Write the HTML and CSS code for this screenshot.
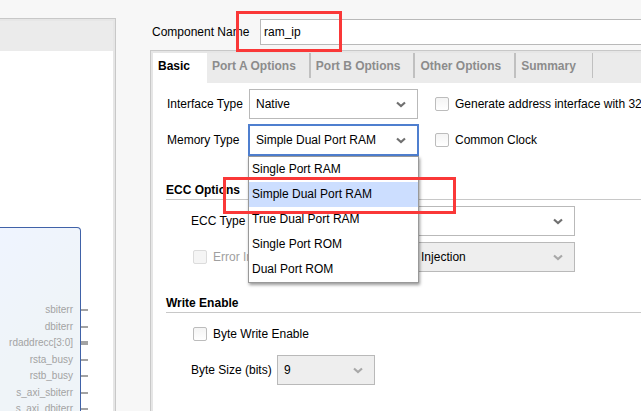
FILE: index.html
```
<!DOCTYPE html>
<html lang="en">
<head>
  <meta charset="UTF-8">
  <meta name="viewport" content="width=device-width, initial-scale=1.0">
  <title>Block Memory Generator</title>
  <link rel="stylesheet" href="styles.css">
</head>
<body>
  <svg class="defs" aria-hidden="true">
    <symbol id="chevron" viewBox="0 0 10 7">
      <path d="M1 1.5 L5 5 L9 1.5" fill="none" stroke="currentColor" stroke-width="2.2"/>
    </symbol>
  </svg>

  <aside class="preview">
    <div class="preview-header"></div>
    <div class="symbol">
      <ul class="ports">
        <li>sbiterr</li>
        <li>dbiterr</li>
        <li class="bus">rdaddrecc[3:0]</li>
        <li>rsta_busy</li>
        <li>rstb_busy</li>
        <li>s_axi_sbiterr</li>
        <li>s_axi_dbiterr</li>
      </ul>
    </div>
  </aside>

  <main class="config">
    <div class="name-row">
      <label for="name">Component Name</label>
      <input type="text" id="name" value="ram_ip">
      <span class="mark mark-name"></span>
    </div>

    <section class="panel">
      <nav class="tabs">
        <button class="tab active">Basic</button>
        <button class="tab">Port A Options</button>
        <button class="tab">Port B Options</button>
        <button class="tab">Other Options</button>
        <button class="tab">Summary</button>
      </nav>

      <div class="content">
        <div class="row">
          <label class="main-label" for="interface">Interface Type</label>
          <div class="select type-select">
            <select id="interface"><option>Native</option></select>
            <svg class="arrow"><use href="#chevron"/></svg>
          </div>
          <label class="check"><input type="checkbox">Generate address interface with 32 bits</label>
        </div>
        <div class="row">
          <label class="main-label" for="memory">Memory Type</label>
          <div class="select type-select open">
            <select id="memory"><option>Simple Dual Port RAM</option></select>
            <svg class="arrow"><use href="#chevron"/></svg>
            <ul class="menu" role="listbox">
              <li role="option">Single Port RAM</li>
              <li role="option" class="selected" aria-selected="true">Simple Dual Port RAM<span class="mark mark-option"></span></li>
              <li role="option">True Dual Port RAM</li>
              <li role="option">Single Port ROM</li>
              <li role="option">Dual Port ROM</li>
            </ul>
          </div>
          <label class="check"><input type="checkbox">Common Clock</label>
        </div>

        <h2>ECC Options</h2>
        <div class="group ecc">
          <div class="row">
            <label class="sub-label" for="ecc">ECC Type</label>
            <div class="select ecc-select">
              <select id="ecc"><option>No ECC</option></select>
              <svg class="arrow"><use href="#chevron"/></svg>
            </div>
          </div>
          <div class="row">
            <label class="check disabled"><input type="checkbox" disabled>Error Injection Type</label>
            <div class="select error-select disabled">
              <select aria-label="Error Injection Type" disabled><option>Single Bit Error Injection</option></select>
              <svg class="arrow"><use href="#chevron"/></svg>
            </div>
          </div>
        </div>

        <h2>Write Enable</h2>
        <div class="group">
          <div class="row">
            <label class="check"><input type="checkbox">Byte Write Enable</label>
          </div>
          <div class="row">
            <label class="sub-label" for="size">Byte Size (bits)</label>
            <div class="select size-select disabled">
              <select id="size" disabled><option>9</option></select>
              <svg class="arrow"><use href="#chevron"/></svg>
            </div>
          </div>
        </div>
      </div>
    </section>
  </main>
</body>
</html>
```

FILE: styles.css
```
* {
  box-sizing: border-box;
}
body {
  margin: 0;
  height: 100vh;
  display: grid;
  grid-template-columns: 116px minmax(0, 1fr);
  grid-template-rows: minmax(0, 1fr);
  gap: 34px;
  overflow: hidden;
  background: #f7f7f7;
  color: #000;
  font: 12px/16px "Liberation Sans", Arial, sans-serif;
  white-space: nowrap;
}
ul {
  list-style: none;
  margin: 0;
  padding: 0;
}
input, select, button {
  font: inherit;
  color: inherit;
  margin: 0;
}
.defs {
  position: absolute;
  width: 0;
  height: 0;
}

/* symbol preview */
.preview {
  margin-top: 18px;
  border-top: 1px solid #c8c8c8;
  border-right: 1px solid #c8c8c8;
  background: #fff;
  box-shadow: inset -2px 2px #e6e6e6;
  padding: 2px 2px 0 0;
  overflow: hidden;
}
.preview-header {
  height: 30px;
  background: #ebebeb;
}
.symbol {
  width: 81px;
  height: 400px;
  margin-top: 176px;
  padding-top: 74px;
  border: 1px solid #4062a8;
  border-left: 0;
  border-radius: 0 4px 0 0;
  background: linear-gradient(135deg, #eff4ff, #eff4f8 30%);
}
.ports {
  display: grid;
  grid-auto-rows: 16px 17px;
  margin-right: -8px;
  font-size: 10px;
  color: #a3a3a3;
}
.ports li {
  display: flex;
  justify-content: flex-end;
  align-items: center;
  gap: 8px;
}
.ports li::after {
  content: "";
  width: 7px;
  height: 2px;
  background: #a3a3a3;
}
.ports .bus::after {
  height: 4px;
}

/* configuration */
.config {
  display: flex;
  flex-direction: column;
  gap: 5px;
  padding-top: 19px;
}
.name-row {
  position: relative;
  display: flex;
  align-items: center;
  padding-left: 2px;
}
.name-row label {
  width: 108px;
}
.name-row input {
  flex: 1;
  min-width: 0;
  height: 26px;
  padding: 0 3px;
  border: 1px solid #b9b9b9;
  border-right: 0;
  background: #fff;
  outline: none;
}
.panel {
  flex: 1;
  padding: 2px 0 0 2px;
  border-top: 1px solid #c8c8c8;
  border-left: 1px solid #c8c8c8;
  background: #fff;
  box-shadow: inset 2px 2px #e6e6e6;
}
.tabs {
  display: flex;
  align-items: flex-start;
  height: 30px;
  background: #ebebeb;
}
.tab {
  height: 25px;
  padding: 0 13px 0 5px;
  border: 0;
  border-right: 2px solid #c0c0c0;
  background: none;
  color: #8c8c8c;
  font-weight: bold;
}
.tab:last-child {
  padding-right: 16px;
  border-right-width: 1px;
}
.tab.active {
  height: 30px;
  padding: 0 17px 4px 5px;
  border: 0;
  background: #fff;
  color: #000;
}
.content {
  padding: 6px 0 0 13px;
}
.row {
  display: flex;
  align-items: center;
  height: 30px;
}
.row > * {
  flex-shrink: 0;
}
.row + .row {
  margin-top: 6px;
}
.main-label {
  width: 83px;
  padding-left: 1px;
}
.check {
  display: flex;
  align-items: center;
  gap: 6px;
}
.check input {
  appearance: none;
  width: 14px;
  height: 14px;
  border: 1px solid #bcbcbc;
  border-radius: 2px;
  background: linear-gradient(#f4f4f4, #fff);
}
.check.disabled {
  color: #a0a0a0;
}
.check.disabled input {
  border-color: #dcdcdc;
  background: #f5f5f5;
}
.select {
  position: relative;
  display: grid;
  align-items: center;
}
.select select {
  grid-area: 1 / 1;
  appearance: none;
  width: 100%;
  height: 30px;
  padding: 0 6px;
  border: 1px solid #b9b9b9;
  border-radius: 0;
  background: #fff;
  opacity: 1;
}
.select.disabled select {
  background: #eee;
}
.arrow {
  grid-area: 1 / 1;
  justify-self: end;
  width: 10px;
  height: 7px;
  margin-right: 12px;
  color: #707070;
  pointer-events: none;
}
.disabled .arrow {
  color: #a8a8a8;
}
.type-select {
  width: 169px;
  margin-right: 17px;
}
.open select {
  border-color: #4f7fcf;
  box-shadow: 0 0 0 1px #4f7fcf;
}
.menu {
  position: absolute;
  z-index: 1;
  top: 31px;
  left: -1px;
  right: -1px;
  border: 1px solid #999;
  background: #fff;
  box-shadow: 1px 2px 3px rgba(0, 0, 0, 0.4);
}
.menu li {
  position: relative;
  padding-left: 3px;
  line-height: 25px;
}
.menu .selected {
  background: #ccdeff;
}
h2 {
  margin: 27px 0 6px;
  padding-bottom: 1px;
  border-bottom: 1px solid #c8c8c8;
  font-size: 12px;
}
.group {
  padding-left: 27px;
}
.ecc {
  width: 409px;
  max-width: 100%;
}
.ecc + h2 {
  margin-top: 23px;
}
.group .sub-label {
  width: 86px;
  margin-left: -2px;
}
.group.ecc .sub-label {
  width: 59px;
}
.ecc-select {
  flex: 1;
}
.error-select {
  width: 245px;
  margin-left: auto;
}
.size-select {
  width: 98px;
}

/* red highlight frames */
.mark {
  position: absolute;
  border: 3px solid #fa3838;
  pointer-events: none;
}
.mark-name {
  top: -8px;
  left: 86px;
  width: 106px;
  height: 41px;
}
.mark-option {
  top: -5px;
  left: -26px;
  width: 233px;
  height: 37px;
  z-index: 1;
}
```
